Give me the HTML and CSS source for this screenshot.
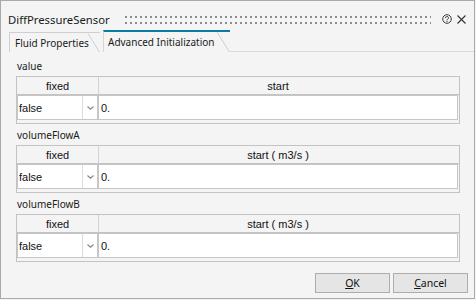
FILE: index.html
```html
<!DOCTYPE html>
<html>
<head>
<meta charset="utf-8">
<link rel="stylesheet" href="styles.css">
</head>
<body>
<div class="window">
  <div class="titlebar">
    <span class="title">DiffPressureSensor</span>
    <div class="grip">
      <svg width="100%" height="8">
        <defs>
          <pattern id="dots" width="5" height="6" patternUnits="userSpaceOnUse">
            <rect x="0" y="0" width="2" height="2" fill="#8c8c8c"/>
          </pattern>
        </defs>
        <rect x="0" y="0" width="100%" height="8" fill="url(#dots)"/>
      </svg>
    </div>
    <svg class="help" width="10" height="10" viewBox="0 0 10 10">
      <circle cx="5" cy="5" r="4.3" fill="none" stroke="#3a3a3a" stroke-width="1"/>
      <path d="M3.5 4 A1.5 1.4 0 1 1 5.6 5.2 C5.1 5.5 5 5.8 5 6.3" fill="none" stroke="#3a3a3a" stroke-width="1"/>
      <rect x="4.5" y="7" width="1" height="1" fill="#3a3a3a"/>
    </svg>
    <svg class="close" width="9" height="9" viewBox="0 0 9 9">
      <path d="M0.5 0.5 L8.5 8.5 M8.5 0.5 L0.5 8.5" stroke="#333" stroke-width="1.1"/>
    </svg>
  </div>

  <div class="tabbar">
    <div class="tab tab-inactive">
      <span class="tab-text">Fluid Properties</span>
      <svg class="slant" width="12" height="19" viewBox="0 0 12 19"><path d="M0 0.5 L11.5 19" stroke="#cfcfcf" stroke-width="1" fill="none"/></svg>
    </div>
    <div class="tab tab-active">
      <span class="tab-text">Advanced Initialization</span>
      <svg class="slant" width="13" height="20" viewBox="0 0 13 20"><path d="M0 0 L12.5 20" stroke="#cfcfcf" stroke-width="1" fill="none"/></svg>
    </div>
    <div class="tab-fill"></div>
  </div>

  <div class="page">
    <section class="param">
      <div class="plabel">value</div>
      <div class="ptable">
        <div class="thead">
          <div class="th th-fixed">fixed</div>
          <div class="th th-start">start</div>
        </div>
        <div class="trow">
          <div class="combo">
            <span class="combo-text">false</span>
            <span class="combo-btn"><svg width="7" height="4" viewBox="0 0 7 4"><path d="M0.5 0.5 L3.5 3.2 L6.5 0.5" stroke="#8a8a8a" stroke-width="1.2" fill="none"/></svg></span>
          </div>
          <div class="vinput">0.</div>
        </div>
      </div>
    </section>

    <section class="param">
      <div class="plabel">volumeFlowA</div>
      <div class="ptable">
        <div class="thead">
          <div class="th th-fixed">fixed</div>
          <div class="th th-start">start ( m3/s )</div>
        </div>
        <div class="trow">
          <div class="combo">
            <span class="combo-text">false</span>
            <span class="combo-btn"><svg width="7" height="4" viewBox="0 0 7 4"><path d="M0.5 0.5 L3.5 3.2 L6.5 0.5" stroke="#8a8a8a" stroke-width="1.2" fill="none"/></svg></span>
          </div>
          <div class="vinput">0.</div>
        </div>
      </div>
    </section>

    <section class="param">
      <div class="plabel">volumeFlowB</div>
      <div class="ptable">
        <div class="thead">
          <div class="th th-fixed">fixed</div>
          <div class="th th-start">start ( m3/s )</div>
        </div>
        <div class="trow">
          <div class="combo">
            <span class="combo-text">false</span>
            <span class="combo-btn"><svg width="7" height="4" viewBox="0 0 7 4"><path d="M0.5 0.5 L3.5 3.2 L6.5 0.5" stroke="#8a8a8a" stroke-width="1.2" fill="none"/></svg></span>
          </div>
          <div class="vinput">0.</div>
        </div>
      </div>
    </section>
  </div>

  <div class="buttons">
    <button class="btn"><u>O</u>K</button>
    <button class="btn"><u>C</u>ancel</button>
  </div>
</div>
</body>
</html>
```

FILE: styles.css
```css
html, body {
  margin: 0;
  padding: 0;
  background: #f4f4f4;
}

.window {
  width: 475px;
  height: 299px;
  box-sizing: border-box;
  border: 1px solid #a9a9a9;
  background: #f4f4f4;
  display: flex;
  flex-direction: column;
  font-family: "Noto Sans", sans-serif;
  color: #1a1a1a;
}

.titlebar {
  height: 29px;
  box-sizing: border-box;
  padding: 7px 8px 0 7px;
  display: flex;
  align-items: center;
  flex-shrink: 0;
}

.title {
  font-size: 11.3px;
  line-height: 15px;
  color: #1a1a1a;
}

.grip {
  flex: 1;
  height: 8px;
  margin-left: 15px;
  margin-right: 11px;
  margin-top: 1px;
  display: flex;
}

.grip svg {
  display: block;
}

.help {
  display: block;
  margin-right: 5px;
}

.close {
  display: block;
}

.tabbar {
  height: 22px;
  display: flex;
  align-items: flex-end;
  padding-left: 8px;
  flex-shrink: 0;
}

.tab {
  display: flex;
  align-items: stretch;
  box-sizing: border-box;
}

.tab-text {
  display: flex;
  align-items: center;
  font-size: 10px;
  white-space: nowrap;
}

.tab-inactive {
  height: 20px;
  border-top: 1px solid #cfcfcf;
  border-left: 1px solid #cfcfcf;
}

.tab-inactive .tab-text {
  width: 78px;
  padding-left: 5px;
  box-sizing: border-box;
}

.tab-active {
  height: 22px;
  margin-left: 3px;
  border-top: 2px solid #0a7aa6;
  border-left: 1px solid #d6d6d6;
}

.tab-active .tab-text {
  width: 113px;
  padding-left: 4px;
  box-sizing: border-box;
}

.slant {
  display: block;
  flex-shrink: 0;
}

.tab-fill {
  flex: 1;
  height: 0;
  border-bottom: 1px solid #d9d9d9;
}

.page {
  padding: 6px 14px 0 15px;
  display: flex;
  flex-direction: column;
  gap: 3px;
  flex-shrink: 0;
}

.param {
  display: flex;
  flex-direction: column;
  gap: 2px;
}

.plabel {
  height: 16px;
  line-height: 16px;
  font-size: 10px;
  padding-left: 1px;
}

.ptable {
  height: 48px;
  box-sizing: border-box;
  border: 1px solid #c3c3c3;
  background: #f4f4f4;
  font-family: "Liberation Sans", Arial, sans-serif;
  font-size: 11px;
  color: #111;
}

.thead {
  height: 18px;
  box-sizing: border-box;
  border-bottom: 1px solid #c3c3c3;
  display: flex;
}

.th {
  display: flex;
  align-items: center;
  justify-content: center;
  box-sizing: border-box;
}

.th-fixed {
  width: 82px;
  border-right: 1px solid #d2d2d2;
}

.th-start {
  flex: 1;
  padding-right: 2px;
}

.trow {
  height: 25px;
  display: flex;
  margin-right: 1px;
}

.combo {
  width: 81px;
  box-sizing: border-box;
  border: 1px solid #c6c6c6;
  background: #fff;
  display: flex;
}

.combo-text {
  flex: 1;
  display: flex;
  align-items: center;
  padding-left: 1px;
  border-right: 1px solid #dcdcdc;
}

.combo-btn {
  width: 14px;
  display: flex;
  align-items: center;
  justify-content: center;
}

.combo-btn svg {
  display: block;
}

.vinput {
  flex: 1;
  box-sizing: border-box;
  border: 1px solid #c6c6c6;
  background: #fff;
  display: flex;
  align-items: center;
  padding-left: 2px;
}

.buttons {
  display: flex;
  justify-content: flex-end;
  gap: 3px;
  padding-right: 6px;
  margin-top: 11px;
}

.btn {
  width: 75px;
  height: 20px;
  box-sizing: border-box;
  border: 1px solid #adadad;
  background: #e5e5e5;
  font-family: "Noto Sans", sans-serif;
  font-size: 10.5px;
  color: #111;
  padding: 0;
  margin: 0;
}
```
